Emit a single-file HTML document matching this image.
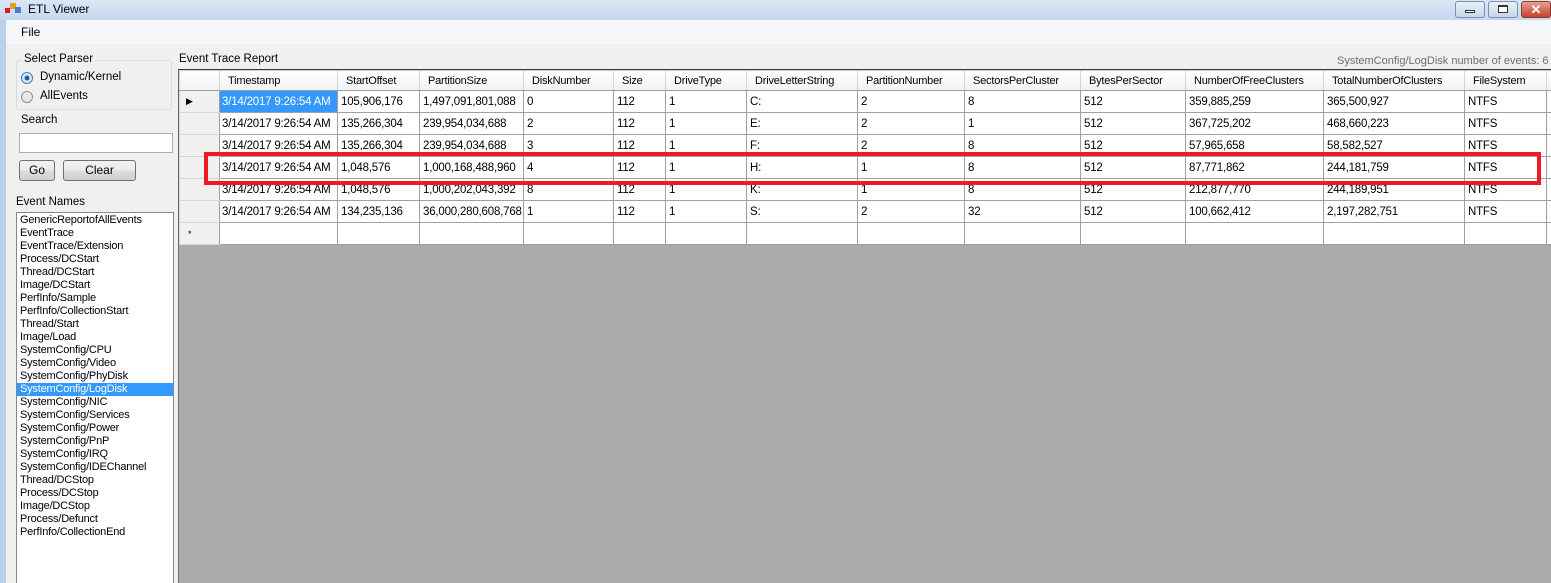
<!DOCTYPE html>
<html><head><style>
*{margin:0;padding:0;box-sizing:border-box}
html,body{width:1551px;height:583px;overflow:hidden}
body{background:#f0f0f0;font-family:"Liberation Sans",sans-serif;font-size:11px;color:#000;position:relative}
.a{position:absolute}
#title{left:0;top:0;width:1551px;height:20px;background:linear-gradient(#dbe7f5,#c5d7ee)}
#menu{left:6px;top:20px;width:1545px;height:24px;background:#f5f6f8}
table{position:absolute;left:179px;top:70px;width:1373px;border-collapse:collapse;table-layout:fixed;background:#fff}
td{border:1px solid #a0a0a0;height:22px;padding:0 0 0 3px;white-space:nowrap;overflow:hidden;font-size:11.5px;letter-spacing:-0.2px}
tr.h td{height:20px;background:linear-gradient(#fff,#f1f2f4);border-color:#d5d5d5 #d5d5d5 #a0a0a0 #d5d5d5;padding-left:8px;font-size:11px}
td.rh{background:#f0f0f0;border-color:#d5d5d5 #a0a0a0 #d5d5d5 #d5d5d5;padding:0}
.lb div{height:13px;line-height:13px;padding-left:3px;font-size:11px;letter-spacing:-0.2px}
.btn{border:1px solid #707070;border-radius:3px;background:linear-gradient(#f2f2f2,#ebebeb 50%,#dddddd 51%,#cfcfcf);text-align:center;line-height:19px;font-size:12px}
</style></head><body>
<div class="a" style="left:0;top:20px;width:6px;height:563px;background:#b9d1ea"></div>
<div class="a" id="title"></div>
<div class="a" style="left:10px;top:3px;width:6px;height:6px;background:#e0a020"></div>
<div class="a" style="left:15px;top:7px;width:6px;height:6px;background:#4a7ed0"></div>
<div class="a" style="left:5px;top:8px;width:5px;height:5px;background:#d02020"></div>
<div class="a" style="left:28px;top:2px;font-size:12px">ETL Viewer</div>
<div class="a" style="left:1455px;top:1px;width:30px;height:17px;border:1px solid #7a90b0;border-radius:3px;background:linear-gradient(#e8f0fa,#c6d6ea)"></div>
<div class="a" style="left:1465px;top:10px;width:10px;height:3px;border:1px solid #333;background:#fff"></div>
<div class="a" style="left:1488px;top:1px;width:30px;height:17px;border:1px solid #7a90b0;border-radius:3px;background:linear-gradient(#e8f0fa,#c6d6ea)"></div>
<div class="a" style="left:1498px;top:5px;width:10px;height:8px;border:1px solid #333;border-top-width:2px;background:#fff"></div>
<div class="a" style="left:1521px;top:1px;width:30px;height:17px;border:1px solid #8a3a30;border-radius:3px;background:linear-gradient(#e8a090,#c84030);color:#fff;font-weight:bold;text-align:center;font-size:13px;line-height:15px">✕</div>
<div class="a" id="menu"></div>
<div class="a" style="left:21px;top:25px;font-size:12px">File</div>

<div class="a" style="left:16px;top:60px;width:156px;height:50px;border:1px solid #d5dfe5;border-radius:3px"></div>
<div class="a" style="left:22px;top:53px;background:#f0f0f0;padding:0 2px;font-size:11.5px">Select Parser</div>
<div class="a" style="left:21px;top:72px;width:12px;height:12px;border-radius:50%;border:1px solid #3c7fb1;background:radial-gradient(#1f5fa0 30%,#dbeaf7 40%)"></div>
<div class="a" style="left:40px;top:71px;font-size:11.5px">Dynamic/Kernel</div>
<div class="a" style="left:21px;top:91px;width:12px;height:12px;border-radius:50%;border:1px solid #8e8f8f;background:#e8e8e8"></div>
<div class="a" style="left:40px;top:90px;font-size:11.5px">AllEvents</div>
<div class="a" style="left:21px;top:114px;font-size:11.5px">Search</div>
<div class="a" style="left:19px;top:133px;width:154px;height:20px;border:1px solid #abadb3;background:#fff"></div>
<div class="a btn" style="left:19px;top:160px;width:36px;height:21px">Go</div>
<div class="a btn" style="left:63px;top:160px;width:73px;height:21px">Clear</div>
<div class="a" style="left:16px;top:196px;font-size:11.5px">Event Names</div>
<div class="a lb" style="left:16px;top:212px;width:158px;height:371px;border:1px solid #828790;border-bottom:none;background:#fff;padding-top:1px">
<div>GenericReportofAllEvents</div><div>EventTrace</div><div>EventTrace/Extension</div><div>Process/DCStart</div><div>Thread/DCStart</div><div>Image/DCStart</div><div>PerfInfo/Sample</div><div>PerfInfo/CollectionStart</div><div>Thread/Start</div><div>Image/Load</div><div>SystemConfig/CPU</div><div>SystemConfig/Video</div><div>SystemConfig/PhyDisk</div><div style="background:#3399ff;color:#fff">SystemConfig/LogDisk</div><div>SystemConfig/NIC</div><div>SystemConfig/Services</div><div>SystemConfig/Power</div><div>SystemConfig/PnP</div><div>SystemConfig/IRQ</div><div>SystemConfig/IDEChannel</div><div>Thread/DCStop</div><div>Process/DCStop</div><div>Image/DCStop</div><div>Process/Defunct</div><div>PerfInfo/CollectionEnd</div>
</div>

<div class="a" style="left:179px;top:53px;font-size:11.5px">Event Trace Report</div>
<div class="a" style="left:1337px;top:55px;font-size:11px;color:#6d6d6d">SystemConfig/LogDisk number of events: 6</div>
<div class="a" style="left:178px;top:69px;width:1373px;height:514px;background:#ababab;border-top:1px solid #333;border-left:1px solid #696969"></div>
<table>
<colgroup><col style="width:40px"><col style="width:118px"><col style="width:82px"><col style="width:104px"><col style="width:90px"><col style="width:52px"><col style="width:81px"><col style="width:111px"><col style="width:107px"><col style="width:116px"><col style="width:105px"><col style="width:138px"><col style="width:141px"><col style="width:82px"><col style="width:6px"></colgroup>
<tr class="h"><td class="rh"></td><td>Timestamp</td><td>StartOffset</td><td>PartitionSize</td><td>DiskNumber</td><td>Size</td><td>DriveType</td><td>DriveLetterString</td><td>PartitionNumber</td><td>SectorsPerCluster</td><td>BytesPerSector</td><td>NumberOfFreeClusters</td><td>TotalNumberOfClusters</td><td>FileSystem</td><td></td></tr>
<tr><td class="rh" style="font-size:9px;padding-left:6px">▶</td><td style="background:#3399ff;color:#fff;padding-left:2px">3/14/2017 9:26:54 AM</td><td>105,906,176</td><td>1,497,091,801,088</td><td>0</td><td>112</td><td>1</td><td>C:</td><td>2</td><td>8</td><td>512</td><td>359,885,259</td><td>365,500,927</td><td>NTFS</td><td></td></tr>
<tr><td class="rh"></td><td style="padding-left:2px">3/14/2017 9:26:54 AM</td><td>135,266,304</td><td>239,954,034,688</td><td>2</td><td>112</td><td>1</td><td>E:</td><td>2</td><td>1</td><td>512</td><td>367,725,202</td><td>468,660,223</td><td>NTFS</td><td></td></tr>
<tr><td class="rh"></td><td style="padding-left:2px">3/14/2017 9:26:54 AM</td><td>135,266,304</td><td>239,954,034,688</td><td>3</td><td>112</td><td>1</td><td>F:</td><td>2</td><td>8</td><td>512</td><td>57,965,658</td><td>58,582,527</td><td>NTFS</td><td></td></tr>
<tr><td class="rh"></td><td style="padding-left:2px">3/14/2017 9:26:54 AM</td><td>1,048,576</td><td>1,000,168,488,960</td><td>4</td><td>112</td><td>1</td><td>H:</td><td>1</td><td>8</td><td>512</td><td>87,771,862</td><td>244,181,759</td><td>NTFS</td><td></td></tr>
<tr><td class="rh"></td><td style="padding-left:2px">3/14/2017 9:26:54 AM</td><td>1,048,576</td><td>1,000,202,043,392</td><td>8</td><td>112</td><td>1</td><td>K:</td><td>1</td><td>8</td><td>512</td><td>212,877,770</td><td>244,189,951</td><td>NTFS</td><td></td></tr>
<tr><td class="rh"></td><td style="padding-left:2px">3/14/2017 9:26:54 AM</td><td>134,235,136</td><td>36,000,280,608,768</td><td>1</td><td>112</td><td>1</td><td>S:</td><td>2</td><td>32</td><td>512</td><td>100,662,412</td><td>2,197,282,751</td><td>NTFS</td><td></td></tr>
<tr><td class="rh" style="font-size:9px;padding-left:8px">*</td><td></td><td></td><td></td><td></td><td></td><td></td><td></td><td></td><td></td><td></td><td></td><td></td><td></td><td></td></tr>
</table>
<div class="a" style="left:204px;top:152px;width:1337px;height:33px;border:4px solid #ed1c24"></div>
</body></html>
